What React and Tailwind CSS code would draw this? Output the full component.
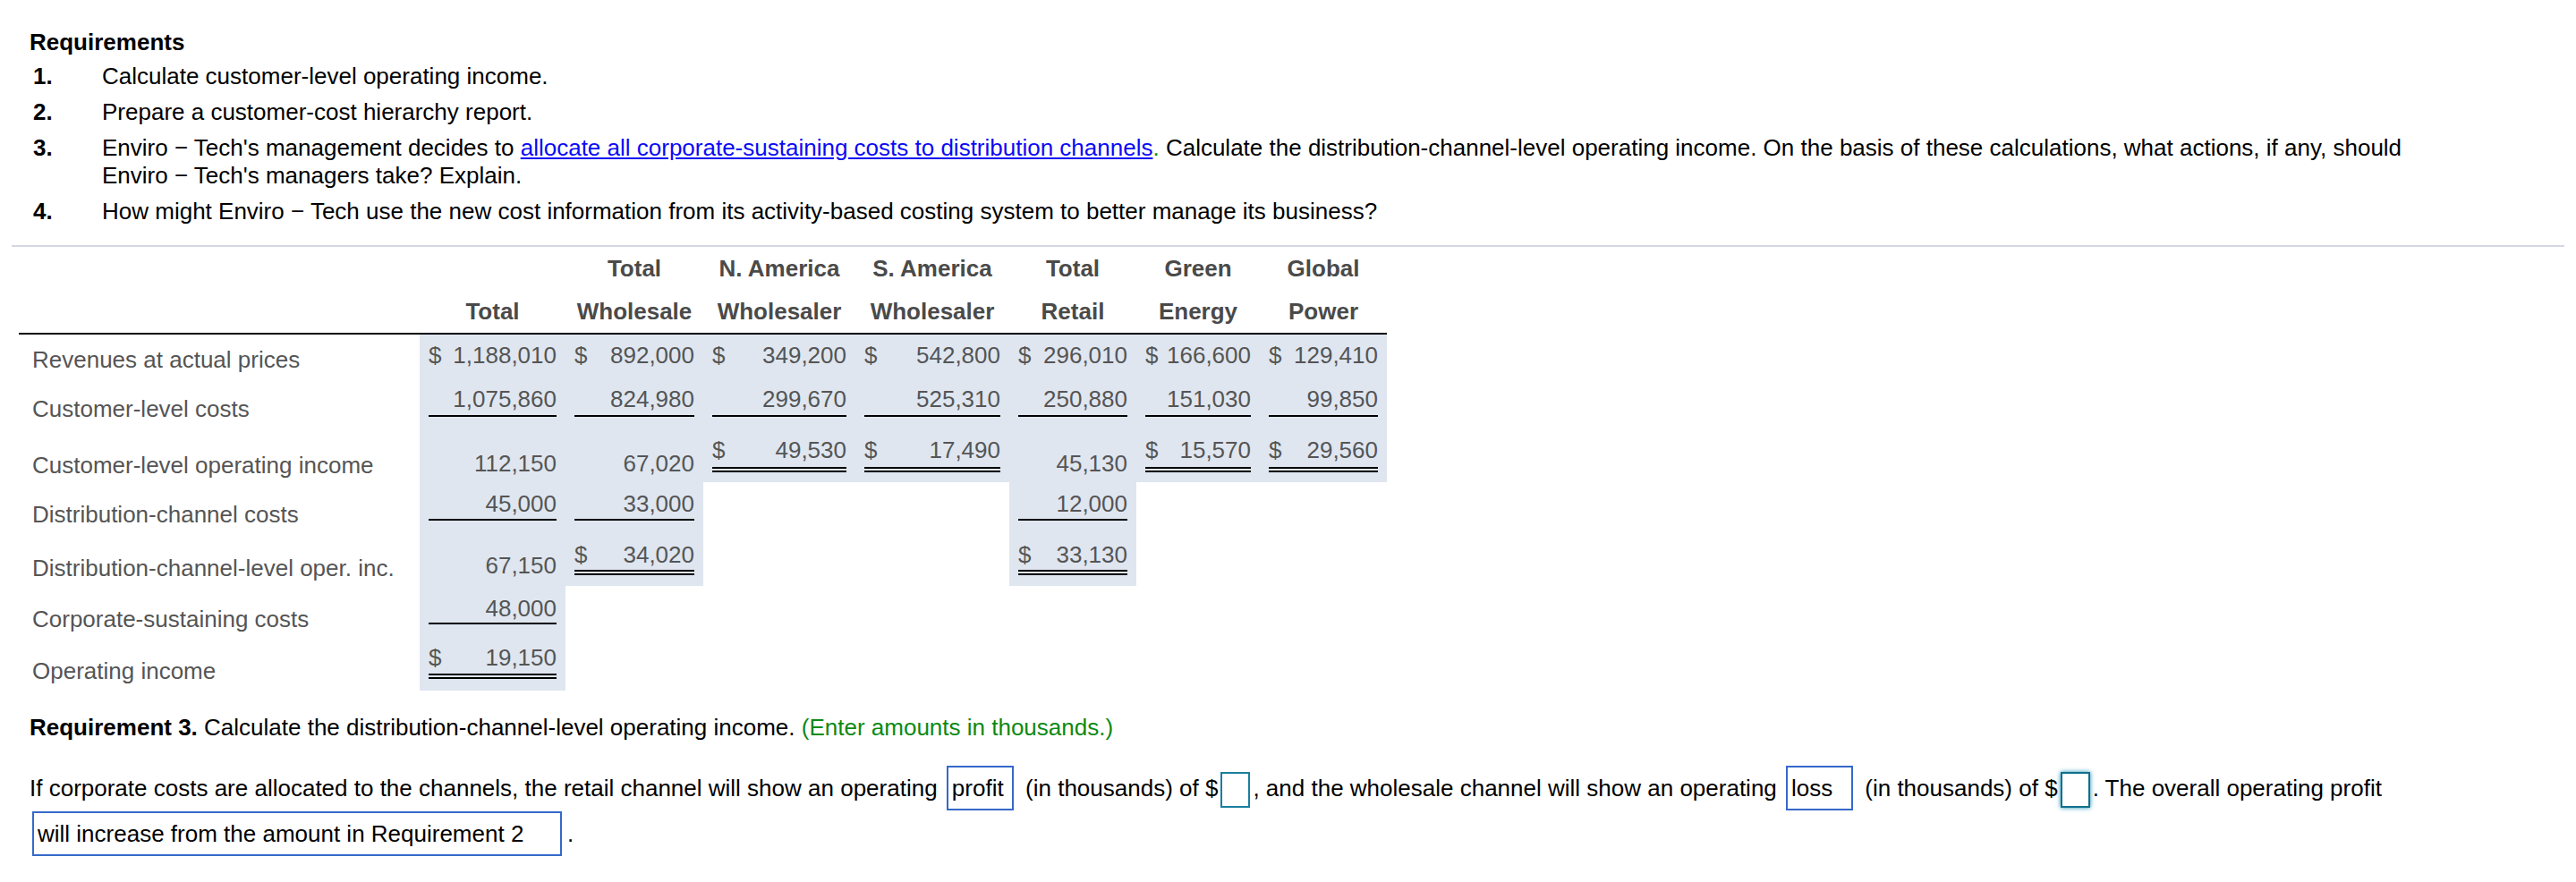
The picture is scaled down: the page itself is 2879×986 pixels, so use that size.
import React from "react";

// rows of the customer-cost hierarchy report; u = underline (1 single, 2 double), d = shows "$"
const rows = [
  {
    label: "Revenues at actual prices",
    h: "h-[55px]", lab: "pb-[12px]", plain: "pb-[17px]", line: "", gap: "",
    cells: [
      { v: "1,188,010", d: true }, { v: "892,000", d: true }, { v: "349,200", d: true },
      { v: "542,800", d: true }, { v: "296,010", d: true }, { v: "166,600", d: true }, { v: "129,410", d: true },
    ],
  },
  {
    label: "Customer-level costs",
    h: "h-[55px]", lab: "pb-[12px]", plain: "", line: "pb-[18px]", gap: "pb-[3px]",
    cells: [
      { v: "1,075,860", u: 1 }, { v: "824,980", u: 1 }, { v: "299,670", u: 1 },
      { v: "525,310", u: 1 }, { v: "250,880", u: 1 }, { v: "151,030", u: 1 }, { v: "99,850", u: 1 },
    ],
  },
  {
    label: "Customer-level operating income",
    h: "h-[55px]", lab: "pb-[4px]", plain: "pb-[6px]", line: "pb-[11px]", gap: "pb-[4px]",
    cells: [
      { v: "112,150" }, { v: "67,020" }, { v: "49,530", d: true, u: 2 },
      { v: "17,490", d: true, u: 2 }, { v: "45,130" }, { v: "15,570", d: true, u: 2 }, { v: "29,560", d: true, u: 2 },
    ],
  },
  {
    label: "Distribution-channel costs",
    h: "h-[58px]", lab: "pb-[7px]", plain: "", line: "pb-[15px]", gap: "pb-[2px]",
    cells: [{ v: "45,000", u: 1 }, { v: "33,000", u: 1 }, null, null, { v: "12,000", u: 1 }, null, null],
  },
  {
    label: "Distribution-channel-level oper. inc.",
    h: "h-[58px]", lab: "pb-[5px]", plain: "pb-[8px]", line: "pb-[12px]", gap: "pb-[2px]",
    cells: [{ v: "67,150" }, { v: "34,020", d: true, u: 2 }, null, null, { v: "33,130", d: true, u: 2 }, null, null],
  },
  {
    label: "Corporate-sustaining costs",
    h: "h-[58px]", lab: "pb-[6px]", plain: "", line: "pb-[15px]", gap: "pb-[1px]",
    cells: [{ v: "48,000", u: 1 }, null, null, null, null, null, null],
  },
  {
    label: "Operating income",
    h: "h-[59px]", lab: "pb-[7px]", plain: "", line: "pb-[13px]", gap: "pb-[3px]",
    cells: [{ v: "19,150", d: true, u: 2 }, null, null, null, null, null, null],
  },
];

const head1 = ["", "", "Total", "N. America", "S. America", "Total", "Green", "Global"];
const head2 = ["", "Total", "Wholesale", "Wholesaler", "Wholesaler", "Retail", "Energy", "Power"];

const Cell = ({ cell, row }) => {
  if (!cell) return <div />;
  const border =
    cell.u === 1 ? "border-b-2 border-black" : cell.u === 2 ? "border-b-[6px] border-double border-black" : "";
  return (
    <div className={`bg-[#dfe6f0] px-[10px] flex flex-col justify-end ${cell.u ? row.line : row.plain}`}>
      <div className={`flex leading-[30px] ${cell.d ? "justify-between" : "justify-end"} ${border} ${cell.u ? row.gap : ""}`}>
        {cell.d && <span>$</span>}
        <span>{cell.v}</span>
      </div>
    </div>
  );
};

const SelectBox = ({ children, wide }) => (
  <span
    className={`inline-block h-[50px] ml-[3px] mr-[6px] border-2 border-[#3569c9] pl-[4px] leading-[46px] align-baseline ${
      wide ? "w-[592px]" : "w-[75px]"
    }`}
  >
    {children}
  </span>
);

const InputBox = ({ focused }) => (
  <span
    className={`inline-block w-[33px] h-[40px] mx-[3px] align-middle border-2 ${
      focused ? "border-[#0f6f8c] shadow-[0_0_5px_#1b8fb0]" : "border-[#1a7f9e]"
    }`}
  />
);

export default function App() {
  return (
    <div className="w-[2879px] h-[986px] overflow-hidden bg-white text-black text-[26px] font-['Liberation_Sans',Arial,Helvetica,sans-serif]">
      {/* Requirements */}
      <div className="pl-[33px] pt-[32px]">
        <h2 className="font-bold leading-[31px]">Requirements</h2>
        <ol className="mt-[7px] w-[2705px] flex flex-col gap-[9px] leading-[31px]">
          <li className="flex">
            <span className="w-[81px] shrink-0 pl-[4px] font-bold">1.</span>
            <span>Calculate customer-level operating income.</span>
          </li>
          <li className="flex">
            <span className="w-[81px] shrink-0 pl-[4px] font-bold">2.</span>
            <span>Prepare a customer-cost hierarchy report.</span>
          </li>
          <li className="flex">
            <span className="w-[81px] shrink-0 pl-[4px] font-bold">3.</span>
            <p>
              <span>Enviro − Tech's management decides to </span>
              <a href="#" className="text-[#0a0af5] underline">
                allocate all corporate-sustaining costs to distribution channels
              </a>
              <span className="text-[#0a8a14]">.</span>
              <span> Calculate the distribution-channel-level operating income. On the basis of these calculations, what actions, if any, should</span>
              <br />
              <span>Enviro − Tech's managers take? Explain.</span>
            </p>
          </li>
          <li className="flex">
            <span className="w-[81px] shrink-0 pl-[4px] font-bold">4.</span>
            <span>How might Enviro − Tech use the new cost information from its activity-based costing system to better manage its business?</span>
          </li>
        </ol>
      </div>

      <div className="mx-[13px] mt-[22px] border-t-2 border-[#d3d8e1]" />

      {/* Report table */}
      <div className="ml-[21px] w-[1529px] text-[#555]">
        <div className="grid grid-cols-[448px_163px_154px_170px_172px_142px_138px_142px] border-b-2 border-black font-bold text-[#4a4a4a]">
          {head1.map((h, i) => (
            <div key={"a" + i} className="h-[48px] flex items-center justify-center">{h}</div>
          ))}
          {head2.map((h, i) => (
            <div key={"b" + i} className="h-[48px] flex items-center justify-center">{h}</div>
          ))}
        </div>
        {rows.map((row) => (
          <div key={row.label} className={`grid grid-cols-[448px_163px_154px_170px_172px_142px_138px_142px] ${row.h}`}>
            <div className={`pl-[15px] flex items-end leading-[30px] ${row.lab}`}>{row.label}</div>
            {row.cells.map((c, i) => (
              <Cell key={i} cell={c} row={row} />
            ))}
          </div>
        ))}
      </div>

      {/* Requirement 3 answer */}
      <div className="pl-[33px] pr-[20px]">
        <p className="mt-[26px] leading-[31px]">
          <span className="font-bold">Requirement 3.</span> Calculate the distribution-channel-level operating income.{" "}
          <span className="text-[#0a8a14]">(Enter amounts in thousands.)</span>
        </p>
        <p className="mt-[27px] leading-[51px]">
          If corporate costs are allocated to the channels, the retail channel will show an operating{" "}
          <SelectBox>profit</SelectBox> (in thousands) of $<InputBox />, and the wholesale channel will show an operating{" "}
          <SelectBox>loss</SelectBox> (in thousands) of $<InputBox focused />. The overall operating profit{" "}
          <SelectBox wide>will increase from the amount in Requirement 2</SelectBox>.
        </p>
      </div>
    </div>
  );
}
